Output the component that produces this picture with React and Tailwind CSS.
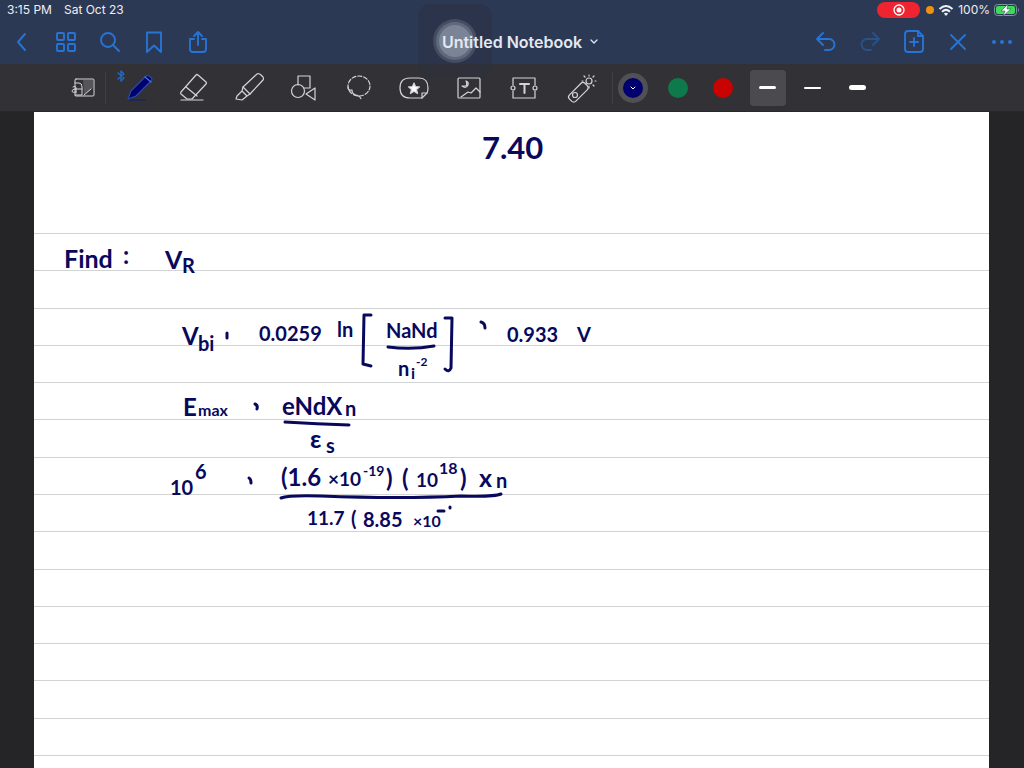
import React, { useState } from "react";

const line = {
  fill: "none",
  stroke: "currentColor",
  strokeLinecap: "round",
  strokeLinejoin: "round",
};

const navLeft = [
  { label: "Back", icon: <path d="M17 6l-7 8 7 8" /> },
  {
    label: "Thumbnails",
    icon: (
      <>
        <rect x="5" y="5" width="7" height="7" rx="1" />
        <rect x="16" y="5" width="7" height="7" rx="1" />
        <rect x="5" y="16" width="7" height="7" rx="1" />
        <rect x="16" y="16" width="7" height="7" rx="1" />
      </>
    ),
  },
  {
    label: "Search",
    icon: (
      <>
        <circle cx="12" cy="12" r="7" />
        <path d="M17 17l6 6" />
      </>
    ),
  },
  { label: "Bookmark", icon: <path d="M7 4.500h14v19.500L14 17.500 7 24z" /> },
  {
    label: "Share",
    icon: (
      <>
        <path d="M10 11H6v10q0 3 3 3h10q3 0 3-3V11h-4" />
        <path d="M14 17V4M10 8l4-4 4 4" />
      </>
    ),
  },
];

const navRight = [
  { label: "Undo", icon: <path d="M11 5l-6 6 6 6M5 11h12a5 5 0 010 11h-4" /> },
  { label: "Redo", dim: true, icon: <path d="M17 5l6 6-6 6M23 11H11a5 5 0 000 11h4" /> },
  {
    label: "Add page",
    icon: (
      <>
        <path d="M5 6q0-3 3-3h10l5 5v13q0 3-3 3H8q-3 0-3-3z" />
        <path d="M18 3v5h5M14 10v8M10 14h8" />
      </>
    ),
  },
  { label: "Close editing", icon: <path d="M7 7l14 14M21 7L7 21" /> },
  {
    label: "More",
    icon: (
      <g fill="currentColor" stroke="none">
        <circle cx="6" cy="14" r="2" />
        <circle cx="14" cy="14" r="2" />
        <circle cx="22" cy="14" r="2" />
      </g>
    ),
  },
];

const tools = [
  {
    label: "Pen",
    icon: (
      <>
        <path d="M7 29l3-8L25 6q2-1 4 .5T31 10L15 26z" fill="#00006e" stroke="#1f4cae" />
        <path d="M24 7l6 5" stroke="#4d7bd0" />
        <path d="M9 30h15" stroke="#151b72" />
      </>
    ),
  },
  {
    label: "Eraser",
    icon: (
      <>
        <path d="M5 22L20 5q1-1 2 0l8 7q1 1 0 2L16 29h-5L5 24q-1-1 0-2z" />
        <path d="M10 17l11 9M5 30h22" />
      </>
    ),
  },
  {
    label: "Highlighter",
    icon: (
      <>
        <path d="M12 17L26 4q2-1 4 1l2 2q1 2 0 3L19 24z" />
        <path d="M12 17l-1 4 5 5 3-2M11 21l-5 5-1 3 6 1 5-4" />
      </>
    ),
  },
  {
    label: "Shapes",
    icon: (
      <>
        <path d="M12 15V6h12v12h-6" />
        <circle cx="12" cy="21" r="6.500" />
        <path d="M20 24l9-6v12z" />
      </>
    ),
  },
  {
    label: "Lasso",
    icon: (
      <>
        <ellipse cx="18" cy="16" rx="11" ry="10" strokeDasharray="4 2" />
        <path d="M7 17q0 4 4 3 0 4 4 5 4 1 5 4" strokeDasharray="4 1" />
      </>
    ),
  },
  {
    label: "Elements",
    icon: (
      <>
        <path d="M14 8h9q9 0 9 10 0 3-1 5l-5 5H14Q4 28 4 18T14 8z" />
        <path d="M26 28v-5h5" />
        <path d="M18 13l1.500 3.500 4 .4-3 2.600 1 4-3.500-2.200-3.500 2.200 1-4-3-2.600 4-.4z" fill="white" />
      </>
    ),
  },
  {
    label: "Image",
    icon: (
      <>
        <rect x="7" y="8" width="22" height="20" rx="1" />
        <path d="M15 11q3 6-4 5 4 3 6-1 1-3-2-4M10 27l7-5 3 1 5-5 4 4" />
      </>
    ),
  },
  {
    label: "Text",
    icon: (
      <>
        <path d="M7 15V8h22v7M7 21v7h22v-7" />
        <circle cx="7" cy="18" r="2" />
        <circle cx="29" cy="18" r="2" />
        <path d="M14 14h9M18.500 14v9" strokeWidth="2" />
      </>
    ),
  },
  {
    label: "Laser pointer",
    icon: (
      <>
        <rect x="6" y="18" width="22" height="9" rx="3" transform="rotate(-45 17 22)" />
        <circle cx="14" cy="25" r="2.500" />
        <circle cx="28" cy="11" r="3" />
        <path d="M28 5v1M28 16v2M22 11h-1M34 11h1M23 6l1 1M32 7l1-1M32 15l1 1" />
      </>
    ),
  },
];

// Handwritten fragments, x and y are the start of the baseline on the paper
const notes = [
  { text: "7.40", x: 448, y: 47, size: 31 },
  { text: "Find", x: 30, y: 156, size: 25 },
  { text: ":", x: 89, y: 152, size: 24 },
  { text: "V", x: 131, y: 157, size: 25 },
  { text: "R", x: 148, y: 161, size: 20 },
  { text: "V", x: 148, y: 233, size: 24 },
  { text: "bi", x: 164, y: 239, size: 20 },
  { text: "0.0259", x: 225, y: 229, size: 20 },
  { text: "ln", x: 303, y: 225, size: 20 },
  { text: "NaNd", x: 352, y: 226, size: 20 },
  { text: "n", x: 364, y: 264, size: 20 },
  { text: "i", x: 377, y: 267, size: 16 },
  { text: "-2", x: 382, y: 254, size: 12 },
  { text: "0.933", x: 473, y: 230, size: 20 },
  { text: "V", x: 543, y: 230, size: 20 },
  { text: "E", x: 149, y: 304, size: 24 },
  { text: "max", x: 164, y: 304, size: 16 },
  { text: "eNdX", x: 248, y: 303, size: 24 },
  { text: "n", x: 311, y: 304, size: 20 },
  { text: "ε", x: 276, y: 336, size: 25 },
  { text: "s", x: 292, y: 341, size: 20 },
  { text: "10", x: 136, y: 383, size: 20 },
  { text: "6", x: 161, y: 367, size: 20 },
  { text: "(1.6", x: 247, y: 374, size: 24 },
  { text: "×10", x: 294, y: 374, size: 19 },
  { text: "-19", x: 329, y: 364, size: 14 },
  { text: ")", x: 352, y: 375, size: 24 },
  { text: "(", x: 368, y: 375, size: 24 },
  { text: "10", x: 382, y: 375, size: 19 },
  { text: "18", x: 405, y: 362, size: 16 },
  { text: ")", x: 426, y: 375, size: 24 },
  { text: "x", x: 445, y: 375, size: 25 },
  { text: "n", x: 462, y: 376, size: 20 },
  { text: "11.7", x: 273, y: 413, size: 19 },
  { text: "(", x: 317, y: 414, size: 20 },
  { text: "8.85", x: 329, y: 415, size: 20 },
  { text: "×10", x: 379, y: 415, size: 16 },
];

const strokes = [
  "M337 203h-7l-1 49 8 2",
  "M411 206h7l-1 50q-2 5-6 1",
  "M354 235q24 3 46-1",
  "M447 210q4 1 4 6",
  "M193 221v5",
  "M221 292q3 1 2 5",
  "M251 310q32 2 64 3",
  "M215 366q2 1 2 5",
  "M247 386q8-3 40-2 80 3 140 0 33 1 40-2",
  "M404 399h6M416 395v1",
];

const inks = [
  { label: "Green", fill: "bg-[#0e7a4c]" },
  { label: "Red", fill: "bg-[#c90202]" },
];

const widths = [
  { label: "Medium", bar: "h-[3px]" },
  { label: "Thin", bar: "h-[2px]" },
  { label: "Thick", bar: "h-[5px]" },
];

function NavButton({ item }) {
  return (
    <button
      aria-label={item.label}
      className={`flex h-11 w-11 items-center justify-center ${item.dim ? "text-[#28528a]" : "text-[#2674d6]"}`}
    >
      <svg viewBox="0 0 28 28" className="h-7 w-7" {...line} strokeWidth="1.9">
        {item.icon}
      </svg>
    </button>
  );
}

function StatusBar() {
  return (
    <div className="flex h-5 items-center justify-between pl-[7px] pr-1 text-xs text-[#eceff6]">
      <div className="flex gap-3">
        <span>3:15 PM</span>
        <span>Sat Oct 23</span>
      </div>
      <div className="flex items-center gap-1">
        <span className="mr-0.5 flex h-4 w-[43px] items-center justify-center rounded-full bg-[#ee2431]">
          <svg viewBox="0 0 12 12" className="h-3 w-3">
            <circle cx="6" cy="6" r="5" fill="none" stroke="white" strokeWidth="1.300" />
            <circle cx="6" cy="6" r="2.500" fill="white" />
          </svg>
        </span>
        <span className="h-2 w-2 rounded-full bg-[#ef920d]" />
        <svg viewBox="0 0 16 12" className="h-3 w-4" {...line} strokeWidth="2" strokeLinecap="butt">
          <path d="M1.500 5q6.500-6 13 0M4 7.700q4-3.600 8 0" />
          <path d="M8 12L5.800 9.600q2.200-1.600 4.400 0z" fill="currentColor" stroke="none" />
        </svg>
        <span>100%</span>
        <svg viewBox="0 0 26 12" className="h-3 w-[26px]">
          <rect x="0.500" y="0.500" width="22" height="11" rx="3" fill="none" stroke="#8390a5" />
          <rect x="2" y="2" width="19" height="8" rx="2" fill="#3ddb58" />
          <path d="M24 4q2 2 0 4z" fill="#8390a5" />
          <path d="M14 0L7 7h4l-2 5 8-7h-4z" fill="white" stroke="#2c3955" strokeWidth="0.500" />
        </svg>
      </div>
    </div>
  );
}

function Toolbar() {
  const [width, setWidth] = useState("Medium");

  return (
    <div className="flex h-12 items-center border-b border-[#28272a] bg-[#323135] pl-[61px] text-[#d4d4d6]">
      <button aria-label="Zoom window" className="flex h-11 w-11 items-center justify-center">
        <svg viewBox="0 0 24 20" className="h-5 w-6" {...line}>
          <path d="M12 2h10v8l-9 7z" fill="#55555a" stroke="none" />
          <rect x="4" y="1" width="19" height="17" rx="1" />
          <path d="M4 5h4q3 0 3 4v8H4M4 11h7M20 11l-7 6" />
          <path d="M2 9q3-2 3 1v5M5 11q-4 0-4 2t4 1" />
        </svg>
      </button>
      <div className="mr-[5px] h-8 w-px bg-[#414145]" />
      {tools.map((tool) => (
        <button
          key={tool.label}
          aria-label={tool.label}
          className="relative flex h-11 w-[55px] items-center justify-center"
        >
          <svg viewBox="0 0 36 36" className="h-9 w-9" {...line} strokeWidth="1.2">
            {tool.icon}
          </svg>
          {tool.label === "Pen" && (
            <svg viewBox="0 0 8 12" className="absolute left-1.5 top-1 h-3 w-2 text-[#1c6bd0]" {...line} strokeWidth="1.4">
              <path d="M1 3l6 5-3 3V1l3 3-6 5" />
            </svg>
          )}
        </button>
      ))}
      <div className="ml-1.5 h-8 w-px bg-[#414145]" />
      <button aria-label="Navy" className="mr-0.5 flex h-11 w-10 items-center justify-center">
        <span className="flex h-[30px] w-[30px] items-center justify-center rounded-full border-5 border-[#515155] bg-[#00006e]">
          <svg viewBox="0 0 6 4" className="h-1 w-1.5 text-white" {...line}>
            <path d="M1 1l2 2 2-2" />
          </svg>
        </span>
      </button>
      {inks.map((ink) => (
        <button key={ink.label} aria-label={ink.label} className="flex h-11 w-[45px] items-center justify-center">
          <span className={`h-5 w-5 rounded-full ${ink.fill}`} />
        </button>
      ))}
      {widths.map((item) => (
        <button
          key={item.label}
          aria-label={item.label}
          onClick={() => setWidth(item.label)}
          className="flex h-11 w-[45px] items-center justify-center"
        >
          <span
            className={`flex h-9 w-9 items-center justify-center rounded ${width === item.label ? "bg-[#4b4a4f]" : ""}`}
          >
            <span className={`w-[17px] rounded-full bg-white ${item.bar}`} />
          </span>
        </button>
      ))}
    </div>
  );
}

function Paper() {
  return (
    <main className="relative ml-[34px] mr-[35px] flex-1 bg-white pt-[121px]">
      <div className="flex h-[523px] flex-col justify-between">
        {Array.from({ length: 15 }, (_, i) => (
          <div key={i} className="h-px bg-[#d2d3d5]" />
        ))}
      </div>
      <svg
        className="absolute left-0 top-0 h-[523px] w-full font-['Lato',sans-serif] font-bold"
        fill="#08085c"
      >
        {notes.map((note, i) => (
          <text key={i} x={note.x} y={note.y} fontSize={note.size}>
            {note.text}
          </text>
        ))}
        <g {...line} stroke="#08085c" strokeWidth="3">
          {strokes.map((d) => (
            <path key={d} d={d} />
          ))}
        </g>
      </svg>
    </main>
  );
}

export default function App() {
  return (
    <div className="flex h-screen flex-col overflow-hidden bg-[#252527] font-['Inter',sans-serif]">
      <header className="relative bg-[#2c3955]">
        {/* Assistive touch */}
        <div className="absolute left-[418px] top-1 flex h-[74px] w-[74px] items-center justify-center rounded-xl bg-[#2a3040]/50">
          <span className="flex h-11 w-11 items-center justify-center rounded-full bg-[#7f899c]/30">
            <span className="flex h-[38px] w-[38px] items-center justify-center rounded-full bg-[#8a93a6]/40">
              <span className="h-8 w-8 rounded-full bg-[#8e96a8]/60" />
            </span>
          </span>
        </div>
        <StatusBar />
        <nav className="relative flex h-11 items-center">
          {navLeft.map((item) => (
            <NavButton key={item.label} item={item} />
          ))}
          <button className="flex flex-1 items-center justify-center gap-2 pl-4 font-semibold text-[#e4e8f1]">
            <span className="whitespace-nowrap">Untitled Notebook</span>
            <svg viewBox="0 0 8 6" className="h-1.5 w-2" {...line} strokeWidth="1.3">
              <path d="M1 1l3 3 3-3" />
            </svg>
          </button>
          {navRight.map((item) => (
            <NavButton key={item.label} item={item} />
          ))}
        </nav>
      </header>
      <Toolbar />
      <Paper />
    </div>
  );
}
